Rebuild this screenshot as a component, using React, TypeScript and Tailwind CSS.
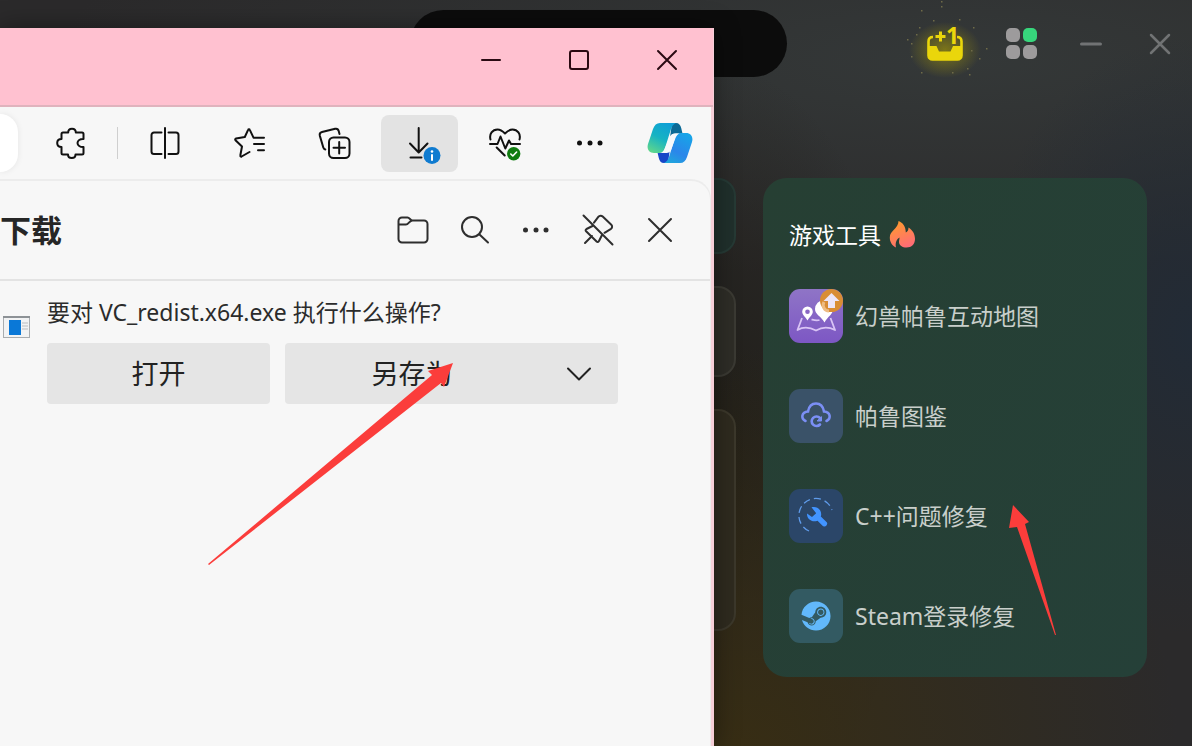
import React from 'react';
import { FaSteam } from 'react-icons/fa';

type IconProps = { children: React.ReactNode; width?: number };

// All window icons share a 32px grid
const Icon: React.FC<IconProps> = ({ children, width = 2 }) => (
  <svg
    className="w-8 h-8 overflow-visible"
    viewBox="0 0 32 32"
    fill="none"
    stroke="currentColor"
    strokeWidth={width}
    strokeLinecap="round"
    strokeLinejoin="round"
    aria-hidden="true"
  >
    {children}
  </svg>
);

const Dots = () => (
  <Icon>
    <g fill="currentColor" stroke="none">
      <circle cx="5.5" cy="16" r="2.5" />
      <circle cx="16" cy="16" r="2.5" />
      <circle cx="26" cy="16" r="2.5" />
    </g>
  </Icon>
);

const CopilotLogo = () => (
  <svg className="w-[46px] h-[42px]" viewBox="0 0 46 42" aria-hidden="true">
    <defs>
      <linearGradient id="copilotLeft" x1="0.7" y1="0" x2="0.2" y2="1">
        <stop offset="0" stopColor="#0f9fd6" />
        <stop offset="0.5" stopColor="#16b3c3" />
        <stop offset="1" stopColor="#5fd68c" />
      </linearGradient>
      <linearGradient id="copilotRight" x1="0.7" y1="0" x2="0.2" y2="1">
        <stop offset="0" stopColor="#17a4e8" />
        <stop offset="0.6" stopColor="#2b86ea" />
        <stop offset="1" stopColor="#1fa6dc" />
      </linearGradient>
    </defs>
    <path d="M25 1h4c3 0 4.500 2 5.200 5l1.300 5.500H29c-3.500 0-5 1.500-6 4z" fill="#0b6a96" />
    <path d="M21 41h-4c-3 0-4.500-2-5.200-5L10.500 30.500H17c3.500 0 5-1.500 6-4z" fill="#1746c8" />
    <path d="M13 1h16c-2.500 1-4 3-5 6l-6 19c-1.300 3.500-2.500 5-6 5H7c-5 0-7.500-4-6-9L6 7c1.500-4 3.500-6 7-6z" fill="url(#copilotLeft)" />
    <path d="M33 41H17c2.500-1 4-3 5-6l6-19c1.300-3.500 2.500-5 6-5h5c5 0 7.500 4 6 9l-5 15c-1.500 4-3.500 6-7 6z" fill="url(#copilotRight)" />
    <path d="M23 14.500c1-2 2.500-3 5-3h4.500c-2 .8-3 2.300-4 4.500l-4.500 12c-.8 2-2.300 3-4.500 3H13c2.500-.5 3.800-2 4.700-4.500z" fill="#f7f9fb" />
  </svg>
);

const toolbarItems = [
  {
    label: '分屏',
    icon: (
      <Icon>
        <path d="M12.500 5.500H5A2.500 2.500 0 0 0 2.500 8v16.500A2.500 2.500 0 0 0 5 27h7.500M19.500 5.500H27A2.500 2.500 0 0 1 29.500 8v16.500A2.500 2.500 0 0 1 27 27h-7.500M16 1v30" />
      </Icon>
    ),
  },
  {
    label: '收藏夹',
    icon: (
      <Icon>
        <path d="M30 10.700H19.500L15.800 2.800a.9.9 0 0 0-1.700 0L10.800 10 2 11.500a1 1 0 0 0-.5 1.700L8 19.500 6.300 28.500a.9.9 0 0 0 1.300 1l7.900-4.500M20 17h10M24 23.200h6" />
      </Icon>
    ),
  },
  {
    label: '集锦',
    icon: (
      <Icon>
        <rect x="10" y="10.500" width="20.500" height="20.500" rx="4.500" />
        <path d="M20.200 15v11.500M14.500 20.700H26M20.500 7l-.8-3a3 3 0 0 0-3.500-2.200L3 5A3 3 0 0 0 .8 8.600L4.300 20.500a3 3 0 0 0 2 2" />
      </Icon>
    ),
  },
  {
    label: '下载',
    active: true,
    icon: (
      <Icon>
        <path d="M14.700 1v24M6 16.500l8.700 9 8.800-9M6.500 30.500h11" />
        <circle cx="28" cy="28.500" r="8.500" fill="#0f7bd0" stroke="none" />
        <path d="M28 28v5" stroke="#fff" />
        <circle cx="28" cy="24.500" r="1.300" fill="#fff" stroke="none" />
      </Icon>
    ),
  },
  {
    label: '浏览器概要',
    icon: (
      <Icon>
        <path d="M1.500 12.500C0 7 3.500 2.500 8.500 2.500c3.500 0 5.500 2 7.500 4 2-2 4-4 7.500-4 5 0 8.500 4.500 7 10M1 17h7.500l3-7.500 4.800 12L20 13.500l2 3.500h9M7.700 20.500l8 8" />
        <circle cx="24.700" cy="26.700" r="6.700" fill="#107c10" stroke="none" />
        <path d="M21.800 27l2 2 3.800-4" stroke="#fff" strokeWidth="1.600" />
      </Icon>
    ),
  },
  { label: '设置及其他', icon: <Dots /> },
];

const panelActions = [
  {
    label: '打开下载文件夹',
    icon: (
      <Icon>
        <path d="M2.500 7A3.500 3.500 0 0 1 6 3.500h5.500c2 0 3 3 5 3h11.500A3.500 3.500 0 0 1 31.500 10v15a3.500 3.500 0 0 1-3.500 3.500H6A3.500 3.500 0 0 1 2.500 25zM2.500 10.500H10c2.500 0 3.500-4 6.500-4" />
      </Icon>
    ),
  },
  {
    label: '搜索下载',
    icon: (
      <Icon>
        <circle cx="14" cy="13" r="10" />
        <path d="M21.500 20.500L30 28.500" />
      </Icon>
    ),
  },
  { label: '更多选项', icon: <Dots /> },
  {
    label: '取消固定',
    icon: (
      <Icon>
        <path d="M1.500 1.500l29 29M3 29l7-7M12 8.700l4.500-6c1-1.300 3-1.300 4.200-.2l8.600 8.300c1.200 1.200 1 3-.3 4l-6.500 4M10.500 12l-6 3c-1 .6-1.200 1.500-.4 2.300l10.500 10.200c.8.8 2 .6 2.400-.5L20 21" />
      </Icon>
    ),
  },
  {
    label: '关闭',
    icon: (
      <Icon>
        <path d="M5 5l22 22M27 5L5 27" />
      </Icon>
    ),
  },
];

const MapIcon = () => (
  <svg className="w-full h-full" viewBox="0 0 54 54" aria-hidden="true">
    <path d="M13 29l-4.500 12c6-3.500 12-3 18.500.5 6-3.500 12-4 19-.5l-4.500-12M22.500 30.500c3 .8 5 1.500 8 .5" fill="none" stroke="#d9c4f5" strokeWidth="1.800" strokeLinejoin="round" />
    <path d="M18.500 17.500a5.300 5.300 0 0 1 5.300 5.300c0 3-2.800 4.500-5.300 8.700-2.500-4.200-5.300-5.700-5.300-8.700a5.300 5.300 0 0 1 5.300-5.300z" fill="#fff" />
    <circle cx="18.500" cy="22.800" r="2.300" fill="#8a68c4" />
    <path d="M35 11a9 9 0 0 1 9 9c0 5.500-5 7-8.500 13.500C32 27 26 25.500 26 20a9 9 0 0 1 9-9z" fill="#fff" />
    <circle cx="42.500" cy="11.500" r="11.500" fill="#d98d35" />
    <path d="M35 13a6 6 0 0 0 5 9" fill="none" stroke="#eebc83" strokeWidth="3" />
    <path d="M42.500 4l8 8h-4.500v7h-7v-7h-4.500z" fill="#ece5f8" />
  </svg>
);

const CloudIcon = () => (
  <svg className="w-full h-full" viewBox="0 0 54 54" fill="none" stroke="#7b8ff5" strokeWidth="2.600" strokeLinecap="round" aria-hidden="true">
    <path d="M16.500 32c-5-2.500-4-9 2.500-9.500 1-5.500 4-8 8-8s7 2.500 8 8c6.500.5 7.500 7 2.500 9.500" />
    <path d="M31 35.500a4.800 4.800 0 1 1 0-6.500" />
    <path d="M32.500 28v4h-4z" fill="#7b8ff5" strokeWidth="1" />
  </svg>
);

const RepairIcon = () => (
  <svg className="w-full h-full" viewBox="0 0 54 54" fill="none" aria-hidden="true">
    <path d="M20 42A17 17 0 1 1 43 21" stroke="#5f9bea" strokeWidth="1.300" strokeDasharray="7 4" />
    <path d="M22.500 18.300c5-1.600 9.700 2 9.700 7 0 .9-.1 1.600-.4 2.300l5.700 5.300c1.700 1.600.2 4.800-2.300 4.600-.8 0-1.300-.4-1.900-1l-4.800-4.800c-5.500 2-10.800-1.700-10.500-7.200l5 3.500 4.200-3.700z" fill="#4294ff" />
  </svg>
);

const tools = [
  { name: '幻兽帕鲁互动地图', tile: 'bg-linear-to-b from-[#8f74c6] to-[#7d57c4]', icon: <MapIcon /> },
  { name: '帕鲁图鉴', tile: 'bg-[#3a5268]', icon: <CloudIcon /> },
  { name: 'C++问题修复', tile: 'bg-[#2b4668]', icon: <RepairIcon /> },
  { name: 'Steam登录修复', tile: 'bg-[#335a62]', icon: <FaSteam className="w-[30px] h-[30px] text-[#62b8fb]" /> },
];

const sparks = [
  [12, 9], [32, 5], [24, 19], [50, 18], [64, 26], [10, 26], [7, 33], [-2, 38], [2, 42], [2, 55],
  [12, 71], [43, 71], [58, 67], [60, 73], [62, 49], [70, 57], [77, 47], [32, 0],
];

function LauncherHeader() {
  return (
    <header className="flex items-center justify-end gap-[38px] h-[87px] pr-[17px]">
      <div className="w-[377px] h-[67px] mr-24 rounded-full bg-[#0c0c0c]" />
      <button aria-label="消息" className="w-[47px] flex justify-center">
        <svg className="w-[47px] h-[67px] overflow-visible" viewBox="0 0 47 67" aria-hidden="true">
          <defs>
            <radialGradient id="glow">
              <stop offset="0" stopColor="#b8a800" stopOpacity="0.55" />
              <stop offset="1" stopColor="#b8a800" stopOpacity="0" />
            </radialGradient>
          </defs>
          <ellipse cx="24" cy="40" rx="36" ry="28" fill="url(#glow)" />
          {sparks.map(([x, y]) => (
            <rect key={`${x}-${y}`} x={x - 12} y={y - 9} width="1.500" height="1.500" fill="#6f6b48" />
          ))}
          <path d="M12 27c-3 0-4.500 2-4.500 4.500v14a4 4 0 0 0 4 4h25a4 4 0 0 0 4-4v-14c0-2.500-1.500-4.500-4.500-4.500" fill="none" stroke="#ead60b" strokeWidth="2.600" />
          <path d="M7 36h8.500l2.500 5.500h11.500l2.500-5.500h8v10a4 4 0 0 1-4 4H11a4 4 0 0 1-4-4z" fill="#ead60b" />
          <path d="M19.500 21.500v10M14.500 26.500h10" stroke="#ead60b" strokeWidth="3" />
          <text x="25" y="34" fill="#ead60b" fontSize="23" fontWeight="700" fontFamily="Noto Sans, sans-serif">1</text>
        </svg>
      </button>
      <button aria-label="应用" className="grid grid-cols-2 gap-[3px] w-[31px]">
        <span className="h-[14px] rounded-[5px] bg-[#9d9b9c]" />
        <span className="h-[14px] rounded-[5px] bg-[#37d67c]" />
        <span className="h-[14px] rounded-[5px] bg-[#9d9b9c]" />
        <span className="h-[14px] rounded-[5px] bg-[#9d9b9c]" />
      </button>
      <button aria-label="最小化" className="w-[31px] flex justify-center text-[#717374]">
        <Icon width={3}><path d="M6.500 16h19" /></Icon>
      </button>
      <button aria-label="关闭" className="w-[31px] flex justify-center text-[#717374]">
        <Icon width={2.5}><path d="M7 7l18 18M25 7L7 25" /></Icon>
      </button>
    </header>
  );
}

function ToolsPanel() {
  return (
    <section className="w-96 rounded-[24px] bg-linear-to-br from-[#263f33] to-[#254038] px-[26px] pt-10 pb-[34px]">
      <h2 className="flex items-center gap-2 h-[34px] mb-[37px] text-[23px] text-white">
        游戏工具
        <svg className="w-[27px] h-7" viewBox="0 0 27 28" aria-hidden="true">
          <defs>
            <linearGradient id="flame" x1="0.3" y1="0" x2="0.7" y2="1">
              <stop offset="0" stopColor="#ff9a2e" />
              <stop offset="1" stopColor="#ff6b78" />
            </linearGradient>
          </defs>
          <path d="M9.500 0c4.500 1.500 7.300 6 7.300 11.500 1.700-.7 2.700-2.500 2.700-5C23.500 9 26 13 26 18c0 5-3.500 8.500-8.500 8.500-4 0-7.500-2-7.500-5.500 0-1.800.6-3 .5-4.500-3 1.500-4.500 5.500-3.500 10C3 24.500.8 21 .8 16.500.8 9.500 9.500 7.500 9.500 0z" fill="url(#flame)" />
        </svg>
      </h2>
      <ul className="flex flex-col gap-[46px]">
        {tools.map((tool) => (
          <li key={tool.name}>
            <a href="#" className="flex items-center gap-3 text-[23px] leading-[34px] text-[#c9cfcb]">
              <span className={`flex items-center justify-center w-[54px] h-[54px] rounded-[11px] overflow-hidden ${tool.tile}`}>
                {tool.icon}
              </span>
              {tool.name}
            </a>
          </li>
        ))}
      </ul>
    </section>
  );
}

function DownloadsPanel() {
  return (
    <section className="flex-1 border-t-2 border-r border-[#ececec] rounded-tr-[20px] bg-[#f7f7f7]">
      <header className="flex items-center h-[100px] pr-[34px] border-b-2 border-[#e3e3e3]">
        <h1 className="text-[31px] font-bold text-[#262626] mr-auto">下载</h1>
        <div className="flex gap-[30px] text-[#2e2e2e]">
          {panelActions.map((action) => (
            <button key={action.label} aria-label={action.label}>{action.icon}</button>
          ))}
        </div>
      </header>
      <div className="flex gap-[17px] pl-[3px] pt-[14px]">
        <svg className="w-[27px] h-[22px] mt-[21px]" viewBox="0 0 27 22" aria-hidden="true">
          <rect x="0.500" y="0.500" width="26" height="21" fill="#f2f3f4" stroke="#a9adb0" />
          <path d="M0 1h27" stroke="#8d9296" strokeWidth="2" />
          <path d="M19 7h6M19 10h6M19 13h6" stroke="#b9bdc0" />
          <rect x="6" y="4" width="12" height="15" fill="#0a78d7" />
        </svg>
        <div className="flex-1">
          <p className="text-[23px] leading-[34px] text-[#2b2b2b]">要对 VC_redist.x64.exe 执行什么操作?</p>
          <div className="flex gap-[15px] mt-[14px] text-[27px] leading-[34px] text-[#222]">
            <button className="w-[223px] h-[61px] rounded bg-[#e5e5e5]">打开</button>
            <div className="flex rounded bg-[#e5e5e5]">
              <button className="w-[254px] h-[61px]">另存为</button>
              <button aria-label="更多保存选项" className="w-[79px] h-[61px] flex items-center justify-center">
                <Icon><path d="M5 10.500L16 21.500l11-11" /></Icon>
              </button>
            </div>
          </div>
        </div>
      </div>
    </section>
  );
}

function BrowserWindow() {
  return (
    <div className="absolute left-0 right-[478px] top-7 bottom-0 flex flex-col bg-[#f7f7f7] border-r-3 border-[#f6cfd8] shadow-[0_0_24px_rgba(0,0,0,0.4)]">
      <div className="flex justify-end gap-14 h-[79px] pt-4 pr-[30px] -mr-[2px] bg-[#ffc1d0] border-b-2 border-[#dfb3bd] text-[#2a0a12]">
        <button aria-label="最小化" className="h-8">
          <Icon><path d="M7 16h18" /></Icon>
        </button>
        <button aria-label="最大化" className="h-8">
          <Icon><rect x="7" y="7" width="18" height="18" rx="2" /></Icon>
        </button>
        <button aria-label="关闭" className="h-8">
          <Icon><path d="M7 7l18 18M25 7L7 25" /></Icon>
        </button>
      </div>
      <div className="flex items-center gap-2 h-[72px] pr-[18px] text-[#111]">
        <div className="w-[18px] h-[58px] mr-auto rounded-r-[29px] bg-white shadow-[0_0_6px_rgba(0,0,0,0.08)]" />
        <button aria-label="扩展" className="w-[77px] h-[57px] flex items-center justify-center">
          <Icon>
            <path d="M8 5.500h5.200c0-2.200 1.600-3.700 3.800-3.700s3.800 1.500 3.800 3.700H27a1.500 1.500 0 0 1 1.500 1.500v5c-3.500-.2-6 1.500-6 4s2.500 4.200 6 4V26a1.500 1.500 0 0 1-1.500 1.500h-6.500c0 2.200-1.500 3.500-3.700 3.500S13 29.700 13 27.500H8A1.500 1.500 0 0 1 6.500 26v-6c-2.500 0-4.300-1.500-4.300-4S4 12 6.500 12V7A1.500 1.500 0 0 1 8 5.500z" />
          </Icon>
        </button>
        <div className="w-px h-8 bg-[#cfcfcf]" />
        {toolbarItems.map((item) => (
          <button
            key={item.label}
            aria-label={item.label}
            className={`w-[77px] h-[57px] rounded-lg flex items-center justify-center ${item.active ? 'bg-[#e3e3e3]' : ''}`}
          >
            {item.icon}
          </button>
        ))}
        <button aria-label="Copilot" className="ml-[11px]">
          <CopilotLogo />
        </button>
      </div>
      <DownloadsPanel />
    </div>
  );
}

export default function App() {
  return (
    <div className="relative min-h-screen overflow-hidden bg-[#2b2a2b] bg-[radial-gradient(ellipse_440px_400px_at_62%_100%,#372d14,transparent),radial-gradient(ellipse_200px_400px_at_60%_62%,#201e18,transparent),radial-gradient(ellipse_220px_300px_at_100%_45%,#222b36,transparent),radial-gradient(ellipse_900px_220px_at_80%_8%,#343838,transparent)] font-['Noto_Sans','Noto_Sans_CJK_SC',sans-serif]">
      <LauncherHeader />
      <main className="flex items-start gap-[27px] pt-[91px] pr-[45px]">
        <div className="flex-1 flex flex-col">
          <div className="h-[76px] rounded-[18px] bg-[#20302c] border-2 border-[#263a35]" />
          <div className="h-[91px] mt-8 rounded-[18px] bg-[#2e2d27] border-2 border-[#3b3a33]" />
          <div className="h-[222px] mt-8 rounded-[18px] bg-[#2f2b1f] border-2 border-[#3c382b]" />
        </div>
        <ToolsPanel />
      </main>
      <BrowserWindow />

      {/* Pointer arrows */}
      <svg className="absolute left-[208px] top-[363px] w-[245px] h-[203px] pointer-events-none" viewBox="0 0 245 203" aria-hidden="true">
        <path d="M245 0l-25 8 4 4L0 201l1 1L233 20l3 4z" fill="#fb3d3b" />
      </svg>
      <svg className="absolute right-[135px] top-[505px] w-12 h-[130px] pointer-events-none" viewBox="0 0 48 130" aria-hidden="true">
        <path d="M4 0L0 23l8-1 38 108h1L16 19l4-2z" fill="#fb3d3b" />
      </svg>
    </div>
  );
}
